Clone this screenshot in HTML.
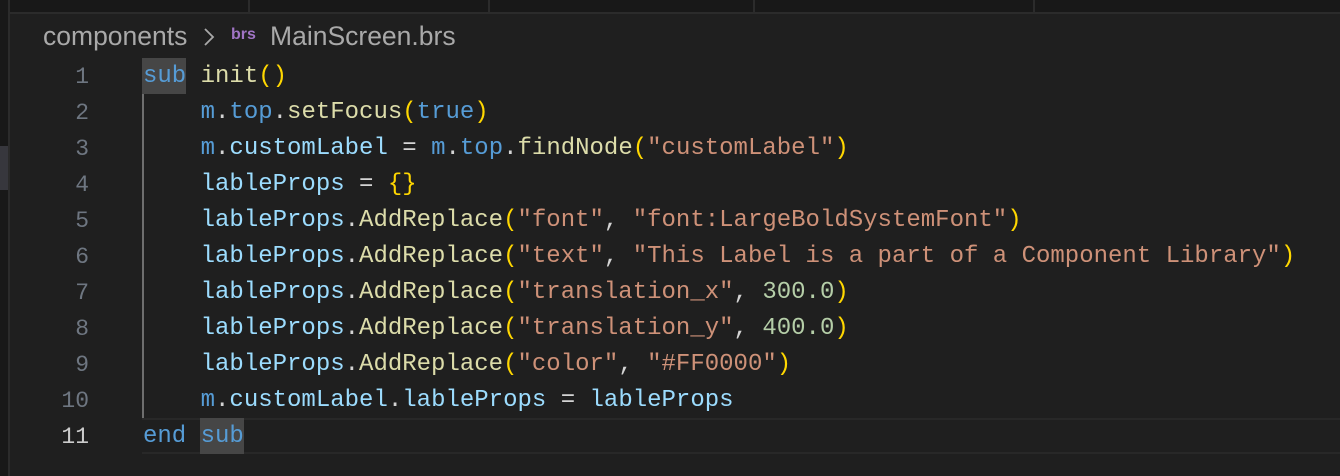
<!DOCTYPE html>
<html><head><style>
html,body{margin:0;padding:0;}
body{width:1340px;height:476px;background:#1f1f1f;position:relative;overflow:hidden;font-family:"Liberation Mono",monospace;}
.abs{position:absolute;}
.code{position:absolute;left:143px;top:59px;font-size:24px;line-height:36px;white-space:pre;color:#d4d4d4;}
.ln{position:absolute;left:20px;width:69px;text-align:right;top:59px;font-size:23px;line-height:36px;color:#6e7681;white-space:pre;}
.k{color:#569cd6}.f{color:#dcdcaa}.p{color:#9cdcfe}.s{color:#ce9178}.b{color:#ffd700}.n{color:#b5cea8}
.bc{position:absolute;top:21px;font-family:'Liberation Sans',sans-serif;font-size:26.5px;color:#a9a9a9;white-space:nowrap}
</style></head><body>
<div class="abs" style="left:0;top:0;width:1340px;height:12px;background:#181818;border-bottom:2px solid #2b2b2b;"></div>
<div class="abs" style="left:248px;top:0;width:2px;height:12px;background:#2b2b2b"></div>
<div class="abs" style="left:488px;top:0;width:2px;height:12px;background:#2b2b2b"></div>
<div class="abs" style="left:753px;top:0;width:2px;height:12px;background:#2b2b2b"></div>
<div class="abs" style="left:1033px;top:0;width:2px;height:12px;background:#2b2b2b"></div>
<div class="abs" style="left:0;top:0;width:8px;height:476px;background:#181818;border-right:2px solid #2b2b2b"></div>
<div class="abs" style="left:0;top:146px;width:8px;height:44px;background:#37373d"></div>
<div class="bc" style="left:43px">components</div>
<svg class="abs" style="left:202px;top:27px" width="14" height="20" viewBox="0 0 14 20"><path d="M3 2 L11 10 L3 18" fill="none" stroke="#a9a9a9" stroke-width="1.8"/></svg>
<div class="abs" style="left:231px;top:26px;font-family:'Liberation Sans',sans-serif;font-size:16px;color:#a074c4;font-weight:bold">brs</div>
<div class="bc" style="left:270px">MainScreen.brs</div>
<div class="abs" style="left:142px;top:418px;width:1198px;height:32px;border-top:2px solid #282828;border-bottom:2px solid #282828"></div>
<div class="abs" style="left:142px;top:94px;width:2px;height:324px;background:#6e6e6e"></div>
<div class="abs" style="left:142px;top:58px;width:44px;height:36px;background:#464646"></div>
<div class="abs" style="left:200px;top:418px;width:44px;height:36px;background:#464646"></div>
<div class="ln">1
2
3
4
5
6
7
8
9
10
<span style="color:#cccccc">11</span></div>
<div class="code"><span class="k">sub</span> <span class="f">init</span><span class="b">()</span>
    <span class="k">m</span>.<span class="k">top</span>.<span class="f">setFocus</span><span class="b">(</span><span class="k">true</span><span class="b">)</span>
    <span class="k">m</span>.<span class="p">customLabel</span> = <span class="k">m</span>.<span class="k">top</span>.<span class="f">findNode</span><span class="b">(</span><span class="s">"customLabel"</span><span class="b">)</span>
    <span class="p">lableProps</span> = <span class="b">{}</span>
    <span class="p">lableProps</span>.<span class="f">AddReplace</span><span class="b">(</span><span class="s">"font"</span>, <span class="s">"font:LargeBoldSystemFont"</span><span class="b">)</span>
    <span class="p">lableProps</span>.<span class="f">AddReplace</span><span class="b">(</span><span class="s">"text"</span>, <span class="s">"This Label is a part of a Component Library"</span><span class="b">)</span>
    <span class="p">lableProps</span>.<span class="f">AddReplace</span><span class="b">(</span><span class="s">"translation_x"</span>, <span class="n">300.0</span><span class="b">)</span>
    <span class="p">lableProps</span>.<span class="f">AddReplace</span><span class="b">(</span><span class="s">"translation_y"</span>, <span class="n">400.0</span><span class="b">)</span>
    <span class="p">lableProps</span>.<span class="f">AddReplace</span><span class="b">(</span><span class="s">"color"</span>, <span class="s">"#FF0000"</span><span class="b">)</span>
    <span class="k">m</span>.<span class="p">customLabel</span>.<span class="p">lableProps</span> = <span class="p">lableProps</span>
<span class="k">end</span> <span class="k">sub</span></div>
</body></html>
